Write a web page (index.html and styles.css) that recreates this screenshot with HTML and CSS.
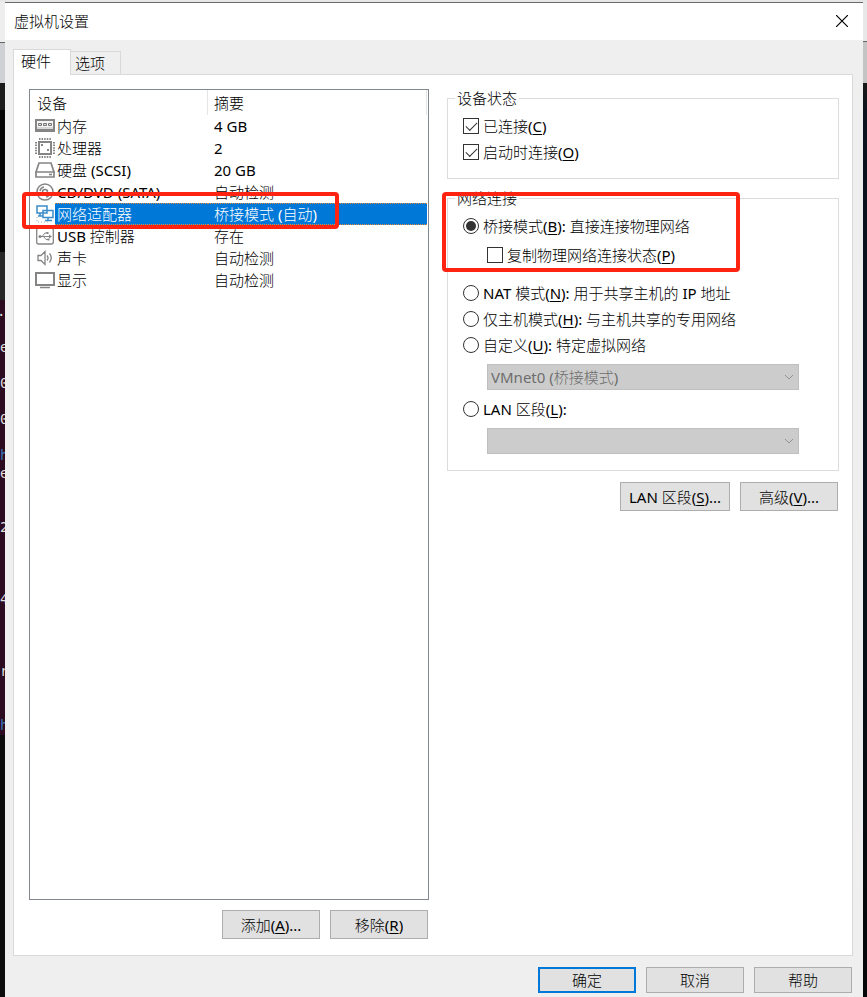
FILE: index.html
```html
<!DOCTYPE html>
<html lang="zh-CN">
<head>
    <meta charset="utf-8">
    <meta name="viewport" content="width=device-width, initial-scale=1">
    <title>虚拟机设置</title>
    <link rel="stylesheet" href="styles.css">
</head>
<body>
<div class="desktop">
    <pre class="terminal">.

e

0

0

<span class="blue">h</span>
e


2



4



r


<span class="blue">h</span></pre>

    <main class="dialog">
        <header class="titlebar">
            <h1>虚拟机设置</h1>
            <button class="close" type="button" aria-label="关闭">
                <svg width="12" height="12" viewBox="0 0 12 12"><path d="M0 0L12 12M12 0L0 12" stroke="#000" stroke-width="1.2"/></svg>
            </button>
        </header>

        <div class="tabs" role="tablist">
            <button class="tab active" type="button" role="tab" aria-selected="true">硬件</button>
            <button class="tab" type="button" role="tab" aria-selected="false">选项</button>
        </div>

        <div class="panel">
            <section class="hardware">
                <div class="list">
                    <table class="devices">
                        <colgroup><col class="col-icon"><col class="col-name"><col></colgroup>
                        <thead>
                            <tr><th colspan="2">设备</th><th>摘要</th></tr>
                        </thead>
                        <tbody>
                            <tr>
                                <td class="icon"><svg width="20" height="20" viewBox="0 0 20 20"><path d="M1 4h18v10H1z" fill="#f4f4f4" stroke="#858585" stroke-width="2"/><path d="M3.500 7.500h3v2h-3zM8.500 7.500h3v2h-3zM13.500 7.500h3v2h-3z" fill="#ddd" stroke="#777"/><path d="M2 12h16" stroke="#bbb"/><path d="M0 15.500h20" stroke="#858585" stroke-width="1"/></svg></td>
                                <td>内存</td><td>4 GB</td>
                            </tr>
                            <tr>
                                <td class="icon"><svg width="20" height="20" viewBox="0 0 20 20"><g fill="none" stroke="#858585"><path d="M4 4h12v12H4z" stroke-width="2"/><path d="M4 1h12M4 19h12M1 4v12M19 4v12" stroke-width="2" stroke-dasharray="1.500 1.100"/></g><path d="M6 6h2v2H6zM12 11h2v2h-2z" fill="#858585"/></svg></td>
                                <td>处理器</td><td>2</td>
                            </tr>
                            <tr>
                                <td class="icon"><svg width="20" height="20" viewBox="0 0 20 20"><g fill="none" stroke="#858585" stroke-width="1.700"><path d="M4 3h12l3 9H1zM1 12h18v5H1z"/><path d="M14 14.500h3"/></g></svg></td>
                                <td>硬盘 (SCSI)</td><td>20 GB</td>
                            </tr>
                            <tr>
                                <td class="icon"><svg width="20" height="20" viewBox="0 0 20 20"><g fill="none" stroke="#858585" stroke-width="1.500"><circle cx="10" cy="10" r="8"/><circle cx="10" cy="10" r="2.500"/><path d="M5 9a5 5 0 0 1 4-4M11 15a5 5 0 0 0 4-4"/></g></svg></td>
                                <td>CD/DVD (SATA)</td><td>自动检测</td>
                            </tr>
                            <tr class="selected">
                                <td class="icon"><svg width="20" height="20" viewBox="0 0 20 20"><g fill="#fff" stroke="#3b8cc9" stroke-width="1.500"><path d="M2 2h10v7H2zM5 9v2.500M3 12h5M8 6.500h10v7H8zM13 13.500v3M10 16.500h7"/></g><path d="M2 13v5h11" fill="none" stroke="#aaa" stroke-dasharray="1 2"/></svg><span class="mark mark-row"></span></td>
                                <td>网络适配器</td><td>桥接模式 (自动)</td>
                            </tr>
                            <tr>
                                <td class="icon"><svg width="20" height="20" viewBox="0 0 20 20"><g fill="none" stroke="#858585"><rect x="1.700" y="2" width="16.600" height="16" rx="2" stroke-width="1.300"/><path d="M4 10.500h11M7 10.500l3-3.500h2M8.500 10.500l2.500 3h2"/></g><path d="M14 8.500l3 2-3 2zM11.500 6h2v2h-2zM12.500 12.500h2v2h-2z" fill="#858585"/><circle cx="5" cy="10.500" r="1.500" fill="#858585"/></svg></td>
                                <td>USB 控制器</td><td>存在</td>
                            </tr>
                            <tr>
                                <td class="icon"><svg width="20" height="20" viewBox="0 0 20 20"><g fill="none" stroke="#858585" stroke-width="1.300"><path d="M3 7.500h3l4-4v13l-4-4H3z"/><path d="M12 7.500q2 2.500 0 5M14.500 5.500q3.500 4.500 0 9"/></g></svg></td>
                                <td>声卡</td><td>自动检测</td>
                            </tr>
                            <tr>
                                <td class="icon"><svg width="20" height="20" viewBox="0 0 20 20"><path d="M1 3h18v12H1z" fill="#fff" stroke="#858585" stroke-width="2"/><path d="M5 17.500h10" stroke="#858585" stroke-width="1.500"/></svg></td>
                                <td>显示</td><td>自动检测</td>
                            </tr>
                        </tbody>
                    </table>
                </div>
                <div class="actions">
                    <button class="btn" type="button">添加(<u>A</u>)...</button>
                    <button class="btn" type="button">移除(<u>R</u>)</button>
                </div>
            </section>

            <section class="settings">
                <fieldset>
                    <legend>设备状态</legend>
                    <label class="option"><input type="checkbox" checked><span>已连接(<u>C</u>)</span></label>
                    <label class="option"><input type="checkbox" checked><span>启动时连接(<u>O</u>)</span></label>
                </fieldset>

                <fieldset class="network">
                    <legend>网络连接</legend>
                    <div class="bridged">
                        <label class="option"><input type="radio" name="net" checked><span>桥接模式(<u>B</u>): 直接连接物理网络</span></label>
                        <label class="option sub"><input type="checkbox"><span>复制物理网络连接状态(<u>P</u>)</span></label>
                        <span class="mark mark-group"></span>
                    </div>
                    <label class="option"><input type="radio" name="net"><span>NAT 模式(<u>N</u>): 用于共享主机的 IP 地址</span></label>
                    <label class="option"><input type="radio" name="net"><span>仅主机模式(<u>H</u>): 与主机共享的专用网络</span></label>
                    <label class="option"><input type="radio" name="net"><span>自定义(<u>U</u>): 特定虚拟网络</span></label>
                    <div class="combo">
                        <select aria-label="特定虚拟网络" disabled><option>VMnet0 (桥接模式)</option></select>
                        <svg width="10" height="6" viewBox="0 0 10 6"><path d="M1 1l4 4 4-4" fill="none" stroke="#929292"/></svg>
                    </div>
                    <label class="option"><input type="radio" name="net"><span>LAN 区段(<u>L</u>):</span></label>
                    <div class="combo">
                        <select aria-label="LAN 区段" disabled><option></option></select>
                        <svg width="10" height="6" viewBox="0 0 10 6"><path d="M1 1l4 4 4-4" fill="none" stroke="#929292"/></svg>
                    </div>
                </fieldset>

                <div class="actions">
                    <button class="btn wide" type="button">LAN 区段(<u>S</u>)...</button>
                    <button class="btn" type="button">高级(<u>V</u>)...</button>
                </div>
            </section>
        </div>

        <footer class="footer">
            <button class="btn primary" type="button">确定</button>
            <button class="btn" type="button">取消</button>
            <button class="btn" type="button">帮助</button>
        </footer>
    </main>

    <div class="backdrop"></div>
</div>
</body>
</html>
```
FILE: styles.css
```css
* {
    box-sizing: border-box;
}

body {
    margin: 0;
}

body, button, select {
    font-family: "Noto Sans", "Noto Sans CJK SC Light", "Noto Sans CJK SC DemiLight", "Noto Sans CJK SC", sans-serif;
    font-size: 15px;
    line-height: 22px;
    color: #000;
}

u {
    text-underline-offset: 2px;
}

.desktop {
    display: grid;
    grid-template-columns: 5px 1fr 4px;
    min-height: 100vh;
    padding-top: 2px;
    background: #e6e6e6;
}

/* windows behind the dialog */
.terminal {
    margin: 0;
    padding-top: 300px;
    overflow: hidden;
    text-indent: -3px;
    font-family: "DejaVu Sans Mono", monospace;
    font-size: 14px;
    line-height: 18px;
    color: #ddd;
    background: linear-gradient(#eee 40px, #666 40px, #666 41px, #cfd0d4 41px, #cfd0d4 81px, #1b1b1b 81px, #1b1b1b 108px, #050505 108px, #050505 250px, #262626 250px, #262626 298px, #2c0a20 298px, #2c0a20 733px, #0c0c0c 733px);
}

.terminal .blue {
    color: #3a74b8;
}

.backdrop {
    background: linear-gradient(#e8e8e8 39px, #666 39px, #666 40px, #c4c4c4 40px, #c4c4c4 81px, #191919 81px, #0b141e 110px, #08121c 500px, #050708);
}

.dialog {
    display: flex;
    flex-direction: column;
    border-top: 1px solid #6b6b6b;
    background: #efefef;
}

.titlebar {
    display: flex;
    align-items: center;
    justify-content: space-between;
    height: 37px;
    padding: 0 9px 2px;
    background: #fff;
}

.titlebar h1 {
    margin: 0;
    font-size: 15px;
    font-weight: normal;
}

.close {
    display: flex;
    padding: 6px;
    border: 0;
    background: none;
}

.tabs {
    display: flex;
    align-items: flex-end;
    padding: 9px 8px 0;
}

.tab {
    height: 23px;
    padding: 0 15px 0 4px;
    border: 1px solid #d9d9d9;
    border-width: 1px 1px 0 0;
    background: #efefef;
}

.tab.active {
    position: relative;
    height: 26px;
    margin-bottom: -1px;
    padding: 0 19px 4px 7px;
    border-width: 1px 1px 0 1px;
    background: #fff;
}

.panel {
    display: flex;
    flex: 1;
    gap: 18px;
    margin: 0 10px 0 8px;
    padding: 14px 13px 16px 15px;
    border: 1px solid #d9d9d9;
    background: #fff;
}

.hardware {
    display: flex;
    flex-direction: column;
    flex: 0 0 400px;
}

.list {
    flex: 1;
    padding-right: 1px;
    border: 1px solid #828790;
}

.devices {
    width: 100%;
    table-layout: fixed;
    border-collapse: separate;
    border-spacing: 0;
}

.col-icon {
    width: 25px;
}

.col-name {
    width: 153px;
}

.devices th {
    height: 25px;
    padding: 0 7px;
    border-right: 1px solid #e5e5e5;
    font-weight: normal;
    text-align: left;
}

.devices td {
    height: 22px;
    padding: 0 6px;
    line-height: 20px;
    white-space: nowrap;
}

.devices th:last-child {
    padding-left: 6px;
}

.devices td:nth-child(2) {
    padding: 0 2px;
}

.devices .icon {
    position: relative;
    padding: 0 0 0 5px;
}

.icon svg {
    display: block;
}

.selected td:not(.icon) {
    border: 1px dotted #e08a3c;
    border-width: 1px 0;
    color: #fff;
    background: #0078d7;
}

/* red annotation frames */
.mark {
    position: absolute;
    z-index: 1;
    border: 4px solid #ff2412;
    border-radius: 4px;
    pointer-events: none;
}

.mark-row {
    top: -11px;
    left: -8px;
    width: 317px;
    height: 37px;
}

.mark-group {
    top: -21px;
    left: -21px;
    width: 298px;
    height: 80px;
}

.actions {
    display: flex;
    justify-content: flex-end;
    gap: 10px;
    padding: 11px 1px 0 0;
}

.btn {
    min-width: 98px;
    height: 29px;
    padding: 0 6px;
    border: 1px solid #adadad;
    background: #e1e1e1;
}

.btn.wide {
    min-width: 110px;
}

.hardware .actions {
    padding-top: 10px;
}

.settings {
    flex: 1;
    min-width: 0;
    margin-top: -2px;
}

fieldset {
    min-width: 0;
    margin: 0;
    padding: 4px 15px 13px;
    border: 1px solid #dcdcdc;
}

legend {
    margin-left: -8px;
    padding: 0 2px;
    line-height: 22px;
}

.network {
    margin-top: 8px;
    padding-bottom: 16px;
}

.bridged {
    position: relative;
    margin-bottom: 12px;
}

.option {
    display: flex;
    align-items: center;
    gap: 4px;
    height: 26px;
    white-space: nowrap;
}

.option.sub {
    margin: 3px 0 0 24px;
}

.option input {
    display: grid;
    place-items: center;
    flex: none;
    appearance: none;
    width: 16px;
    height: 16px;
    margin: 0;
    border: 1px solid #333;
    background: #fff;
}

.option input[type=radio] {
    border-radius: 50%;
}

.option input[type=radio]:checked::before {
    content: "";
    width: 10px;
    height: 10px;
    border-radius: 50%;
    background: #333;
}

.option input[type=checkbox]:checked::before {
    content: "";
    width: 10px;
    height: 5px;
    margin-bottom: 3px;
    border: solid #333;
    border-width: 0 0 1px 1px;
    transform: rotate(-45deg);
}

.combo {
    display: grid;
    align-items: center;
    margin: 6px 24px 6px;
}

.combo select, .combo svg {
    grid-area: 1 / 1;
}

.combo select {
    appearance: none;
    width: 100%;
    height: 26px;
    padding: 0 3px;
    border: 1px solid #bfbfbf;
    border-radius: 0;
    color: #6d6d6d;
    background: #ccc;
    opacity: 1;
}

.combo svg {
    z-index: 1;
    justify-self: end;
    margin-right: 5px;
    pointer-events: none;
}

.network .combo:last-child {
    margin-bottom: 0;
}

.footer {
    display: flex;
    justify-content: flex-end;
    gap: 10px;
    padding: 11px 11px 4px;
}

.footer .btn {
    height: 26px;
}

.btn.primary {
    border: 2px solid #0078d7;
}
```
